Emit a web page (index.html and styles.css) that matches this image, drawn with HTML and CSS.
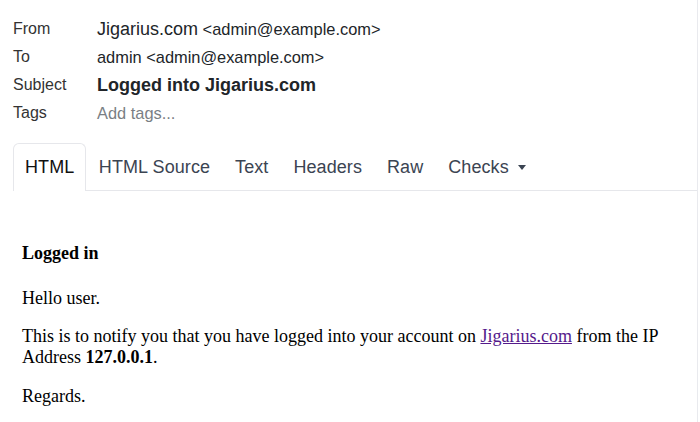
FILE: index.html
```html
<!DOCTYPE html>
<html>
<head>
<meta charset="utf-8">
<link rel="stylesheet" href="styles.css">
</head>
<body>
<div class="page">
  <table class="meta">
    <tr><th>From</th><td><span class="from-name">Jigarius.com</span> <span class="addr">&lt;admin@example.com&gt;</span></td></tr>
    <tr><th>To</th><td>admin &lt;admin@example.com&gt;</td></tr>
    <tr><th>Subject</th><td class="subject">Logged into Jigarius.com</td></tr>
    <tr><th>Tags</th><td class="tags">Add tags...</td></tr>
  </table>
  <ul class="tabs">
    <li class="tab active">HTML</li>
    <li class="tab">HTML Source</li>
    <li class="tab">Text</li>
    <li class="tab">Headers</li>
    <li class="tab">Raw</li>
    <li class="tab">Checks<span class="caret"></span></li>
  </ul>
  <div class="message">
    <h4>Logged in</h4>
    <p>Hello user.</p>
    <p>This is to notify you that you have logged into your account on <a href="#">Jigarius.com</a> from the IP Address <b>127.0.0.1</b>.</p>
    <p>Regards.</p>
  </div>
</div>
</body>
</html>
```
FILE: styles.css
```css
html, body {
  margin: 0;
  padding: 0;
  background: #fff;
}
body {
  font-family: "Liberation Sans", Arial, sans-serif;
  color: #212529;
  overflow: hidden;
}
.page {
  width: 698px;
  height: 422px;
  box-sizing: border-box;
  border-right: 1px solid #e9eaee;
  padding: 15px 0 0 13px;
}
.meta {
  border-collapse: collapse;
  font-size: 16px;
}
.meta th {
  text-align: left;
  font-weight: normal;
  color: #333;
  width: 84px;
  padding: 0;
  height: 28px;
  vertical-align: middle;
}
.meta td {
  padding: 0;
  height: 28px;
  vertical-align: middle;
  white-space: nowrap;
  font-size: 16.4px;
}
.meta td .from-name {
  font-size: 18px;
}
.meta td.subject {
  font-size: 18px;
  font-weight: bold;
}
.meta td.tags {
  color: #7a7f85;
}
.tabs {
  list-style: none;
  margin: 16px 0 0 0;
  padding: 0;
  display: flex;
  border-bottom: 1px solid #e6e7eb;
  font-size: 18px;
  letter-spacing: 0.08px;
}
.tab {
  height: 46px;
  display: flex;
  align-items: center;
  padding: 0 11.5px;
  border: 1px solid transparent;
  border-bottom: none;
  color: #3b4452;
  margin-bottom: -1px;
}
.tab.active {
  color: #111;
  border-color: #e6e7eb;
  border-radius: 6px 6px 0 0;
  background: #fff;
  height: 47px;
  padding: 0 11px;
}
.caret {
  display: inline-block;
  margin-left: 9px;
  border-top: 5px solid #3b4452;
  border-left: 4.5px solid transparent;
  border-right: 4.5px solid transparent;
  margin-top: 1px;
}
.message {
  font-family: "Liberation Serif", "Times New Roman", serif;
  font-size: 18px;
  color: #000;
  padding: 28px 0 0 9px;
  line-height: 1.15;
}
.message h4 {
  font-size: 18px;
  margin: 24px 0;
}
.message p {
  margin: 18px 0;
}
.message a {
  color: #551a8b;
}
```
